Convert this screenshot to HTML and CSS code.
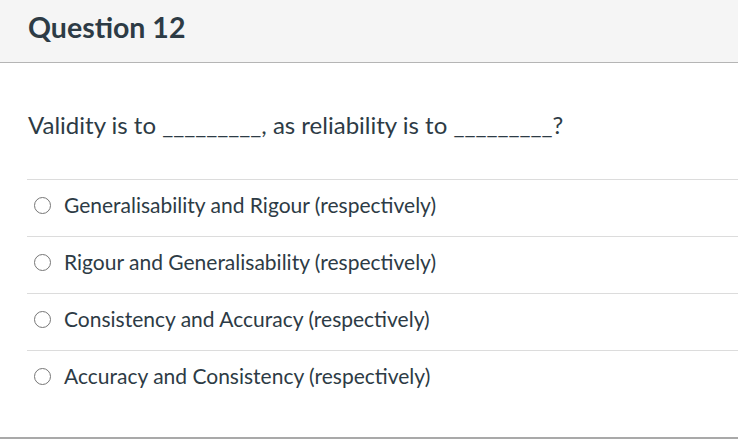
FILE: index.html
```html
<!DOCTYPE html>
<html>
<head>
<meta charset="utf-8">
<link rel="stylesheet" href="styles.css">
</head>
<body>
<div class="quiz">
  <header class="q-header">
    <h2 class="q-title">Question 12</h2>
  </header>
  <div class="q-body">
    <p class="q-text">Validity is to _________, as reliability is to _________?</p>
    <ul class="answers">
      <li class="answer"><span class="radio"></span><span class="label">Generalisability and Rigour (respectively)</span></li>
      <li class="answer"><span class="radio"></span><span class="label">Rigour and Generalisability (respectively)</span></li>
      <li class="answer"><span class="radio"></span><span class="label">Consistency and Accuracy (respectively)</span></li>
      <li class="answer"><span class="radio"></span><span class="label">Accuracy and Consistency (respectively)</span></li>
    </ul>
  </div>
</div>
</body>
</html>
```

FILE: styles.css
```css
html, body {
  margin: 0;
  padding: 0;
  background: #ffffff;
}
body {
  font-family: Lato, "Open Sans", sans-serif;
  color: #2d3b45;
}
.quiz {
  width: 738px;
  height: 439px;
  box-sizing: border-box;
  border-bottom: 2px solid #a9a9a9;
}
.q-header {
  height: 62px;
  background: #f5f5f5;
  border-bottom: 1px solid #b5b5b5;
  display: flex;
  align-items: center;
  padding-left: 28px;
}
.q-title {
  margin: 0;
  font-size: 28.5px;
  font-weight: 700;
  color: #2d3b45;
  line-height: 1;
  padding-bottom: 8px;
}
.q-body {
  padding-left: 27px;
}
.q-text {
  margin: 0;
  padding: 47px 0 0 1px;
  height: 69px;
  font-size: 24px;
  line-height: 30px;
}
.answers {
  list-style: none;
  margin: 0;
  padding: 0;
}
.answer {
  height: 56px;
  border-top: 1px solid #dcdcdc;
  display: flex;
  align-items: center;
  font-size: 21px;
}
.radio {
  box-sizing: border-box;
  width: 17px;
  height: 17px;
  border: 1.5px solid #767676;
  border-radius: 50%;
  margin-left: 7px;
  margin-right: 13px;
  margin-top: -5px;
  flex: none;
}
.label {
  line-height: 24px;
  margin-top: -6px;
}
```
